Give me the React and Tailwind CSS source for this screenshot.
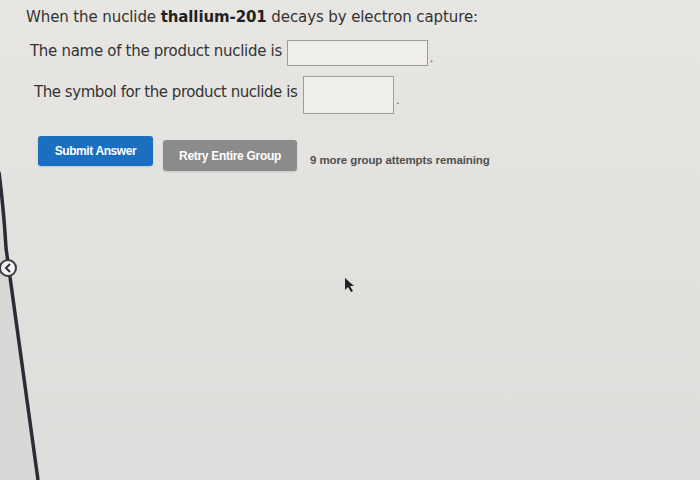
import React from 'react';

export default function App() {
  return (
    <div className="relative w-[700px] h-[480px] overflow-hidden bg-gradient-to-b from-[#e7e6e3] to-[#dedddb] text-[#333]" style={{ fontFamily: '"DejaVu Sans", Verdana, sans-serif' }}>
      {/* Question */}
      <div className="flex flex-col pt-[6px]">
        <p className="ml-[26px] text-[15px] leading-[22px] tracking-[-0.1px]">
          When the nuclide <b className="text-[#222]">thallium-201</b> decays by electron capture:
        </p>

        <div className="ml-[30px] mt-[12px] flex items-center text-[15px] tracking-[-0.3px]">
          <span className="-mt-[4px]">The name of the product nuclide is</span>
          <div className="ml-[5px] w-[141px] h-[26px] border border-[#9c9c9c] bg-[#efeeeb]" />
          <span className="ml-[2px] mt-[10px] text-[10px]">.</span>
        </div>

        <div className="ml-[34px] mt-[10px] flex items-center text-[15px] tracking-[-0.45px]">
          <span className="-mt-[6px]">The symbol for the product nuclide is</span>
          <div className="ml-[6px] w-[91px] h-[38px] border border-[#9c9c9c] bg-[#efeeeb]" />
          <span className="ml-[2px] mt-[10px] text-[10px]">.</span>
        </div>

        {/* Buttons */}
        <div className="ml-[38px] mt-[22px] flex items-start" style={{ fontFamily: '"Liberation Sans", Arial, sans-serif' }}>
          <button className="w-[115px] h-[30px] rounded-[3px] bg-[#1b6fc1] text-white text-[12px] font-bold tracking-[-0.4px] shadow-sm">
            Submit Answer
          </button>
          <button className="ml-[10px] mt-[4px] w-[134px] h-[31px] rounded-[3px] bg-[#8b8b8b] text-white text-[12px] font-bold tracking-[-0.3px] shadow-sm">
            Retry Entire Group
          </button>
          <span className="ml-[13px] mt-[16px] text-[11.5px] font-bold text-[#505050] tracking-[-0.1px]">
            9 more group attempts remaining
          </span>
        </div>
      </div>

      {/* screen bezel edge, side tab and pointer */}
      <svg className="absolute inset-0 pointer-events-none" width="700" height="480" viewBox="0 0 700 480">
        <path d="M -1 172 Q 4 212 6 248 L 38 480 L -2 480 Z" fill="#d9d8d6" />
        <path d="M -1 172 Q 4 212 6 248 L 38 480" fill="none" stroke="#2c2b38" strokeWidth="3.5" />
        <circle cx="8" cy="268" r="8" fill="#f4f4f2" stroke="#3a3a44" strokeWidth="2" />
        <path d="M 10 264 L 6 268 L 10 272" fill="none" stroke="#2c2b38" strokeWidth="2" />
        <path d="M 345 278 L 345 290 L 348 287 L 351 292 L 353 291 L 350 286 L 354 286 Z" fill="#222" />
      </svg>
    </div>
  );
}
